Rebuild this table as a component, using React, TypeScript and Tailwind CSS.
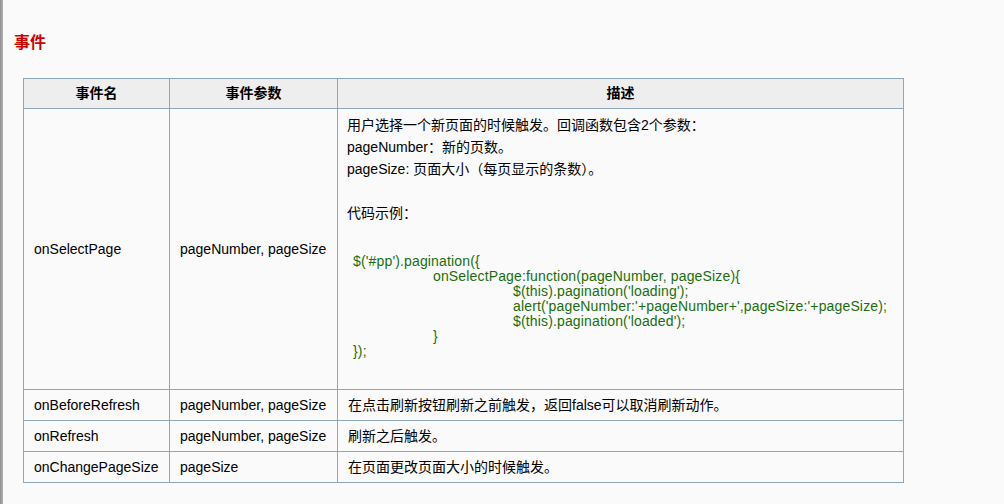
const FONT = "font-['Liberation_Sans','Noto_Sans_CJK_SC',sans-serif]";

const rows = [
  { name: "onBeforeRefresh", params: "pageNumber, pageSize", desc: "在点击刷新按钮刷新之前触发，返回false可以取消刷新动作。" },
  { name: "onRefresh", params: "pageNumber, pageSize", desc: "刷新之后触发。" },
  { name: "onChangePageSize", params: "pageSize", desc: "在页面更改页面大小的时候触发。" },
];

const td = "border border-[#8ba7b8] px-[10px] align-middle";

const code = [
  { indent: "", text: "$('#pp').pagination({" },
  { indent: "pl-[80px]", text: "onSelectPage:function(pageNumber, pageSize){" },
  { indent: "pl-[160px]", text: "$(this).pagination('loading');" },
  { indent: "pl-[160px]", text: "alert('pageNumber:'+pageNumber+',pageSize:'+pageSize);" },
  { indent: "pl-[160px]", text: "$(this).pagination('loaded');" },
  { indent: "pl-[80px]", text: "}" },
  { indent: "", text: "});" },
];

function CodeSample() {
  return (
    <div className="mt-[30px] text-[14px] leading-[15px] text-[#1a6e0c] pl-[6px] tracking-[0.15px]">
      {code.map((l, i) => (
        <div key={i} className={l.indent}>
          {l.text}
        </div>
      ))}
    </div>
  );
}

export default function App() {
  return (
    <div className={`flex h-[504px] w-[1004px] bg-[#fafafa] text-black ${FONT}`}>
      <div className="w-[3px] shrink-0 bg-gradient-to-r from-[#8e8e8e] to-[#b4b4b4]" />
      <div className="flex-1 pl-[11px] pt-[33px]">
        <h2 className="text-[16px] font-bold leading-[20px] text-[#d00000]">事件</h2>
        <table className="mt-[25px] ml-[9px] w-[881px] border-collapse text-[14px]">
          <thead>
            <tr className="bg-[#eeeeee]">
              <th className="border border-[#8ba7b8] h-[30px] w-[146px] font-bold text-center">事件名</th>
              <th className="border border-[#8ba7b8] h-[30px] w-[168px] font-bold text-center">事件参数</th>
              <th className="border border-[#8ba7b8] h-[30px] font-bold text-center">描述</th>
            </tr>
          </thead>
          <tbody>
            <tr>
              <td className={td}>onSelectPage</td>
              <td className={td}>pageNumber, pageSize</td>
              <td className="border border-[#8ba7b8] px-[9px] pt-[5px] pb-[30px] align-top">
                <div className="leading-[22px]">
                  <div>用户选择一个新页面的时候触发。回调函数包含2个参数：</div>
                  <div>pageNumber：新的页数。</div>
                  <div>pageSize: 页面大小（每页显示的条数）。</div>
                  <div>&nbsp;</div>
                  <div>代码示例：</div>
                </div>
                <CodeSample />
              </td>
            </tr>
            {rows.map((r) => (
              <tr key={r.name}>
                <td className={`${td} h-[31px]`}>{r.name}</td>
                <td className={td}>{r.params}</td>
                <td className={`${td} px-[9px]`}>{r.desc}</td>
              </tr>
            ))}
          </tbody>
        </table>
      </div>
    </div>
  );
}
